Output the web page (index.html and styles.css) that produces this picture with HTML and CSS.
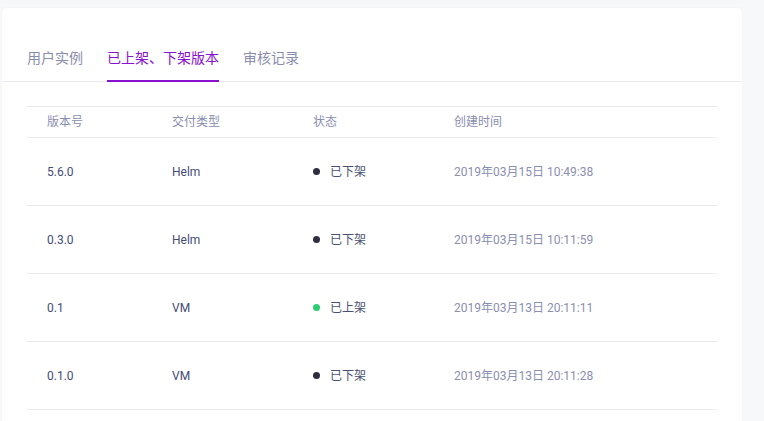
FILE: index.html
```html
<!DOCTYPE html>
<html lang="zh-CN">
<head>
<meta charset="utf-8">
<link rel="stylesheet" href="styles.css">
</head>
<body>
<div class="card">
  <div class="tabs">
    <div class="tab">用户实例</div>
    <div class="tab active">已上架、下架版本</div>
    <div class="tab">审核记录</div>
  </div>
  <div class="table">
    <div class="row head">
      <div class="cell">版本号</div>
      <div class="cell">交付类型</div>
      <div class="cell">状态</div>
      <div class="cell">创建时间</div>
    </div>
    <div class="row">
      <div class="cell ver">5.6.0</div>
      <div class="cell type">Helm</div>
      <div class="cell status"><span class="dot off"></span>已下架</div>
      <div class="cell date">2019年03月15日 10:49:38</div>
    </div>
    <div class="row">
      <div class="cell ver">0.3.0</div>
      <div class="cell type">Helm</div>
      <div class="cell status"><span class="dot off"></span>已下架</div>
      <div class="cell date">2019年03月15日 10:11:59</div>
    </div>
    <div class="row">
      <div class="cell ver">0.1</div>
      <div class="cell type">VM</div>
      <div class="cell status"><span class="dot on"></span>已上架</div>
      <div class="cell date">2019年03月13日 20:11:11</div>
    </div>
    <div class="row">
      <div class="cell ver">0.1.0</div>
      <div class="cell type">VM</div>
      <div class="cell status"><span class="dot off"></span>已下架</div>
      <div class="cell date">2019年03月13日 20:11:28</div>
    </div>
  </div>
</div>
</body>
</html>
```
FILE: styles.css
```css
html, body {
  margin: 0;
  padding: 0;
  background: #f7f8fa;
  font-family: "Roboto", "Noto Sans CJK SC", sans-serif;
  height: 421px;
  overflow: hidden;
}
.card {
  margin: 8px 0 0 2px;
  width: 740px;
  height: 413px;
  overflow: hidden;
  background: #ffffff;
  border-radius: 4px 4px 0 0;
  box-shadow: 0 0 2px rgba(30, 40, 80, 0.06);
}
.tabs {
  display: flex;
  gap: 24px;
  padding: 38px 25px 0;
  height: 35px;
  border-bottom: 1px solid #ececf0;
  box-sizing: content-box;
}
.tab {
  font-size: 14px;
  line-height: 20px;
  color: #8a8dac;
  height: 35px;
  box-sizing: border-box;
  padding-top: 2px;
}
.tab.active {
  color: #8912cf;
  border-bottom: 2px solid #8912cf;
  height: 36px;
}
.table {
  margin: 24px 25px 0;
  border-top: 1px solid #ececf0;
}
.row {
  display: grid;
  grid-template-columns: 125px 141px 141px 1fr;
  align-items: center;
  height: 67px;
  border-bottom: 1px solid #ececf0;
}
.row.head {
  height: 30px;
}
.cell {
  padding-left: 20px;
  font-size: 12px;
  line-height: 16px;
  display: flex;
  align-items: center;
}
.head .cell {
  color: #8a8eb0;
}
.ver, .type {
  color: #454b76;
}
.status {
  color: #4a4f72;
}
.date {
  color: #8a8eb0;
}
.dot {
  flex: none;
  width: 7px;
  height: 7px;
  border-radius: 50%;
  margin-right: 10px;
}
.dot.off {
  background: #2d2f40;
}
.dot.on {
  background: #2ccd73;
}
```
